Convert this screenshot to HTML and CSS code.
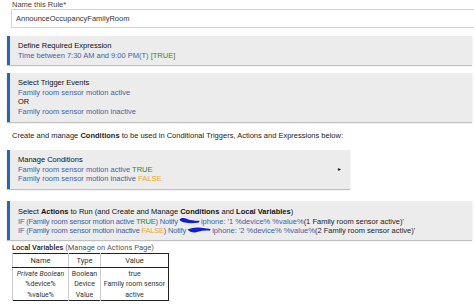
FILE: index.html
```html
<!DOCTYPE html>
<html lang="en">
<head>
    <meta charset="UTF-8">
    <title>Rule Machine</title>
    <link rel="stylesheet" href="styles.css">
</head>
<body>
    <div class="page">
        <div class="field-label">Name this Rule*</div>
        <div class="text-input">AnnounceOccupancyFamilyRoom</div>

        <div class="panel">
            <div class="panel-title">Define Required Expression</div>
            <div class="blue">Time between 7:30 AM and 9:00 PM(T) <span class="green">[TRUE]</span></div>
        </div>

        <div class="panel">
            <div class="panel-title">Select Trigger Events</div>
            <div class="blue">Family room sensor motion active</div>
            <div class="panel-title">OR</div>
            <div class="blue">Family room sensor motion inactive</div>
        </div>

        <p class="note">Create and manage <b>Conditions</b> to be used in Conditional Triggers, Actions and Expressions below:</p>

        <div class="panel panel-short">
            <div>
                <div class="panel-title">Manage Conditions</div>
                <div class="blue">Family room sensor motion active <span class="green">TRUE</span></div>
                <div class="blue">Family room sensor motion inactive <span class="orange">FALSE</span></div>
            </div>
            <span class="arrow">&#9658;</span>
        </div>

        <div class="panel panel-actions">
            <div class="panel-title">Select <b>Actions</b> to Run (and Create and Manage <b>Conditions</b> and <b>Local Variables</b>)</div>
            <div class="blue"><span class="tight">IF (Family room sensor motion active <span class="green">TRUE</span>) Notify</span> <svg class="scribble" width="21" height="8" viewBox="0 0 21 8"><path d="M0.5 2.4 C2.5 0.4 5.5 0.6 7.5 1.8 C10.5 3.4 15 3.8 20.5 3.8 L20 5.6 C15 6.4 10 6.8 6 5.6 C3.5 4.9 1.2 4.2 0.5 2.4 Z" fill="#1020c8"/></svg> iphone: '1 %device% %value%<span class="dark">(1 Family room sensor active)'</span></div>
            <div class="blue"><span class="tight">IF (Family room sensor motion inactive <span class="orange">FALSE</span>) Notify</span> <svg class="scribble" width="24" height="8" viewBox="0 0 24 8"><path d="M0.5 3.4 C4 2.4 8 1.2 12 1.6 C16 2 20 2.4 23.5 3 L23 4.8 C19 4.4 15 4.6 11 5.8 C7 7 3 6.4 0.5 3.4 Z" fill="#1020c8"/></svg> iphone: '2 %device% %value%<span class="dark">(2 Family room sensor active)'</span></div>
        </div>

        <div class="vars-title"><b>Local Variables</b> (Manage on Actions Page)</div>
        <table class="vars">
            <thead>
                <tr><th class="col-name">Name</th><th class="col-type">Type</th><th class="col-value">Value</th></tr>
            </thead>
            <tbody>
                <tr><td><i>Private Boolean</i></td><td>Boolean</td><td>true</td></tr>
                <tr><td>%device%</td><td>Device</td><td>Family room sensor</td></tr>
                <tr><td>%value%</td><td>Value</td><td>active</td></tr>
            </tbody>
        </table>
    </div>
</body>
</html>
```

FILE: styles.css
```css
body {
    margin: 0;
    background: #fff;
    font-family: 'Liberation Sans', Arial, sans-serif;
    font-size: 7.5px;
    line-height: 9.6px;
    color: #222;
    overflow: hidden;
}
.page {
    padding: 0 2px 0 7px;
}
.field-label {
    padding-left: 5px;
    color: #444;
    height: 9px;
    line-height: 9px;
}
.text-input {
    margin-left: 4px;
    margin-right: -20px;
    height: 17px;
    line-height: 17px;
    border: 1px solid #d4d4d4;
    padding-left: 4px;
    color: #333;
}
.panel {
    margin-top: 8px;
    background: #ececec;
    border-left: 3px solid #2468b4;
    padding: 5px 8px 5px 8px;
    box-shadow: 0 1px 1px rgba(0, 0, 0, 0.25);
}
.panel-title {
    color: #111;
}
.blue {
    color: #3f5fa8;
    white-space: nowrap;
}
.green {
    color: #2a8a1e;
}
.orange {
    color: #f2a81d;
}
.dark {
    color: #222;
}
.note {
    margin: 9px 0 0 5px;
    color: #222;
}
.panel-short {
    width: 324px;
    margin-top: 10px;
    display: flex;
    justify-content: space-between;
    align-items: center;
}
.arrow {
    font-size: 5px;
    color: #111;
}
.panel-actions {
    margin-top: 12px;
    padding-top: 6px;
    padding-bottom: 4px;
}
.tight {
    letter-spacing: -0.2px;
}
.scribble {
    vertical-align: -1px;
    margin: 0 -1px 0 -1px;
}
.vars-title {
    margin: 3px 0 0 5px;
    font-family: Roboto, 'Liberation Sans', sans-serif;
    font-size: 7.5px;
    color: #555;
}
.vars-title b {
    color: #222;
    font-weight: 500;
}
.vars {
    margin: 1px 0 0 5px;
    border-collapse: collapse;
    border: 1px solid #222;
    font-family: Roboto, 'Liberation Sans', sans-serif;
    font-size: 7px;
    color: #333;
}
.vars th {
    font-weight: normal;
    font-size: 7.5px;
    height: 13px;
    padding: 0;
    border-bottom: 1px solid #222;
    border-left: 1px solid #ccc;
}
.vars td {
    height: 10.7px;
    padding: 0;
    line-height: 10px;
    text-align: center;
    border-left: 1px solid #ccc;
}
.col-name {
    width: 55px;
}
.col-type {
    width: 31px;
}
.col-value {
    width: 67px;
}
```
